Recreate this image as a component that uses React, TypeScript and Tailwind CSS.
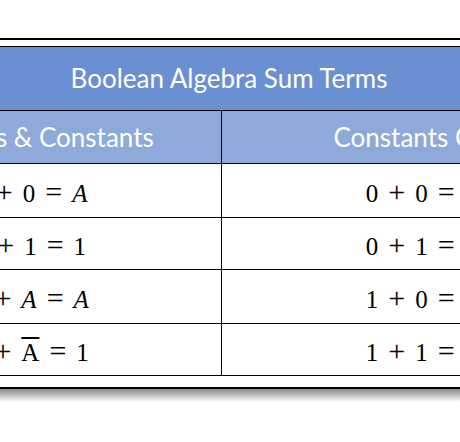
const rows: { left: React.ReactNode; right: string[]; h: string }[] = [
  { left: <><i>A</i><Op s="+" /><span>0</span><Op s="=" /><i>A</i></>, right: ["0", "0", "0"], h: "h-[54px]" },
  { left: <><i>A</i><Op s="+" /><span>1</span><Op s="=" /><span>1</span></>, right: ["0", "1", "1"], h: "h-[52px]" },
  { left: <><i>A</i><Op s="+" /><i>A</i><Op s="=" /><i>A</i></>, right: ["1", "0", "1"], h: "h-[54px]" },
  { left: <><i>A</i><Op s="+" /><span className="overline">A</span><Op s="=" /><span>1</span></>, right: ["1", "1", "1"], h: "h-[52px]" },
];

function Op({ s }: { s: string }) {
  return <span className="px-[10px] text-[30px]">{s}</span>;
}

export default function App() {
  return (
    <div className="w-[460px] h-[442px] overflow-hidden bg-white pt-[38px]">
      <div className="ml-[-163px] w-[784px] flex flex-col">
        <div className="h-[2px] bg-black" />
        <div className="h-[6px]" />
        <div className="border-t border-black bg-[#6a8fd3] h-[64px] flex items-center justify-center text-white text-[26px] font-['Lato',sans-serif]">
          Boolean Algebra Sum Terms
        </div>
        <div className="border-t border-black bg-[#8eaadb] h-[53px] grid grid-cols-[384px_400px] text-white text-[26px] font-['Lato',sans-serif]">
          <div className="flex items-center justify-center">Variables &amp; Constants</div>
          <div className="flex items-center justify-center border-l border-black">Constants Only</div>
        </div>
        {rows.map((r, i) => (
          <div
            key={i}
            className={`border-t border-black grid grid-cols-[384px_400px] text-[25px] text-black font-['Liberation_Serif',serif] ${r.h}`}
          >
            <div className="flex items-center justify-center pt-[2px]">
              <span className="leading-none">{r.left}</span>
            </div>
            <div className="flex items-center justify-center pt-[2px] border-l border-black">
              <span className="leading-none">
                <span>{r.right[0]}</span>
                <Op s="+" />
                <span>{r.right[1]}</span>
                <Op s="=" />
                <span>{r.right[2]}</span>
              </span>
            </div>
          </div>
        ))}
        <div className="border-t border-black h-[12px]" />
        <div className="h-[2px] bg-black" />
        <div className="h-[13px] bg-gradient-to-b from-[#8c8c8c] to-white" />
      </div>
    </div>
  );
}
